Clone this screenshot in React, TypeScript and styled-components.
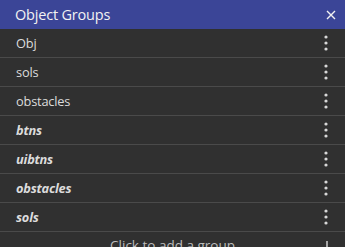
import * as React from 'react';
import styled, { createGlobalStyle } from 'styled-components';

// ------------------------------------
// Data
// ------------------------------------

type Group = {
  name: string;
  shared?: boolean;
};

const groups: Group[] = [
  { name: 'Obj' },
  { name: 'sols' },
  { name: 'obstacles' },
  { name: 'btns', shared: true },
  { name: 'uibtns', shared: true },
  { name: 'obstacles', shared: true },
  { name: 'sols', shared: true },
];

// ------------------------------------
// Component
// ------------------------------------

const App = () => (
  <>
    <GlobalStyle />
    <StyledPanel>
      <StyledHeader>
        <StyledTitle>Object Groups</StyledTitle>
        <StyledClose aria-label="close">
          <svg width="10" height="10" viewBox="0 0 10 10">
            <path d="M1 1L9 9M9 1L1 9" stroke="#f2f2f2" strokeWidth="1.4" />
          </svg>
        </StyledClose>
      </StyledHeader>
      <StyledList>
        {groups.map((g, i) => (
          <StyledRow key={i}>
            <StyledName $shared={g.shared}>{g.name}</StyledName>
            <StyledMenu aria-label="menu">
              <svg width="6" height="16" viewBox="0 0 6 16">
                <circle cx="3" cy="2" r="1.6" fill="#d8d8d8" />
                <circle cx="3" cy="8" r="1.6" fill="#d8d8d8" />
                <circle cx="3" cy="14" r="1.6" fill="#d8d8d8" />
              </svg>
            </StyledMenu>
          </StyledRow>
        ))}
      </StyledList>
      <StyledFooter>
        <StyledAddText>Click to add a group</StyledAddText>
        <StyledPlus>
          <svg width="16" height="16" viewBox="0 0 16 16">
            <path d="M8 0V16M0 8H16" stroke="#d8d8d8" strokeWidth="1.4" />
          </svg>
        </StyledPlus>
      </StyledFooter>
    </StyledPanel>
  </>
);

export default App;

// ------------------------------------
// Styles
// ------------------------------------

const GlobalStyle = createGlobalStyle`
  html, body {
    margin: 0;
    padding: 0;
    background: #303030;
    overflow: hidden;
  }
  body {
    font-family: "Open Sans", "Noto Sans", sans-serif;
  }
`;

const StyledPanel = styled.div`
  width: 345px;
  height: 247px;
  background: #303030;
  display: flex;
  flex-direction: column;
  overflow: hidden;
`;

const StyledHeader = styled.div`
  height: 29px;
  flex: none;
  background: #3b4597;
  display: flex;
  align-items: center;
  justify-content: space-between;
  padding: 0 9px 0 15px;
`;

const StyledTitle = styled.div`
  color: #f2f2f2;
  font-size: 14.5px;
  letter-spacing: -0.2px;
`;

const StyledClose = styled.button`
  border: 0;
  background: none;
  padding: 0;
  display: flex;
`;

const StyledList = styled.div`
  display: flex;
  flex-direction: column;
`;

const StyledRow = styled.div`
  height: 28px;
  flex: none;
  border-bottom: 1px solid #4a4a4a;
  display: flex;
  align-items: center;
  justify-content: space-between;
  padding: 0 16px 0 16px;
`;

const StyledName = styled.span<{ $shared?: boolean }>`
  color: #dcdcdc;
  font-size: 12.8px;
  letter-spacing: -0.2px;
  font-weight: ${(p) => (p.$shared ? 700 : 400)};
  font-style: ${(p) => (p.$shared ? 'italic' : 'normal')};
`;

const StyledMenu = styled.button`
  border: 0;
  background: none;
  padding: 0;
  display: flex;
`;

const StyledFooter = styled.div`
  height: 28px;
  flex: none;
  display: flex;
  align-items: flex-start;
  justify-content: center;
  position: relative;
  padding-top: 4px;
`;

const StyledAddText = styled.span`
  color: #bdbdbd;
  font-size: 13.5px;
  line-height: 18px;
`;

const StyledPlus = styled.span`
  position: absolute;
  right: 10px;
  top: 9px;
  display: flex;
`;
